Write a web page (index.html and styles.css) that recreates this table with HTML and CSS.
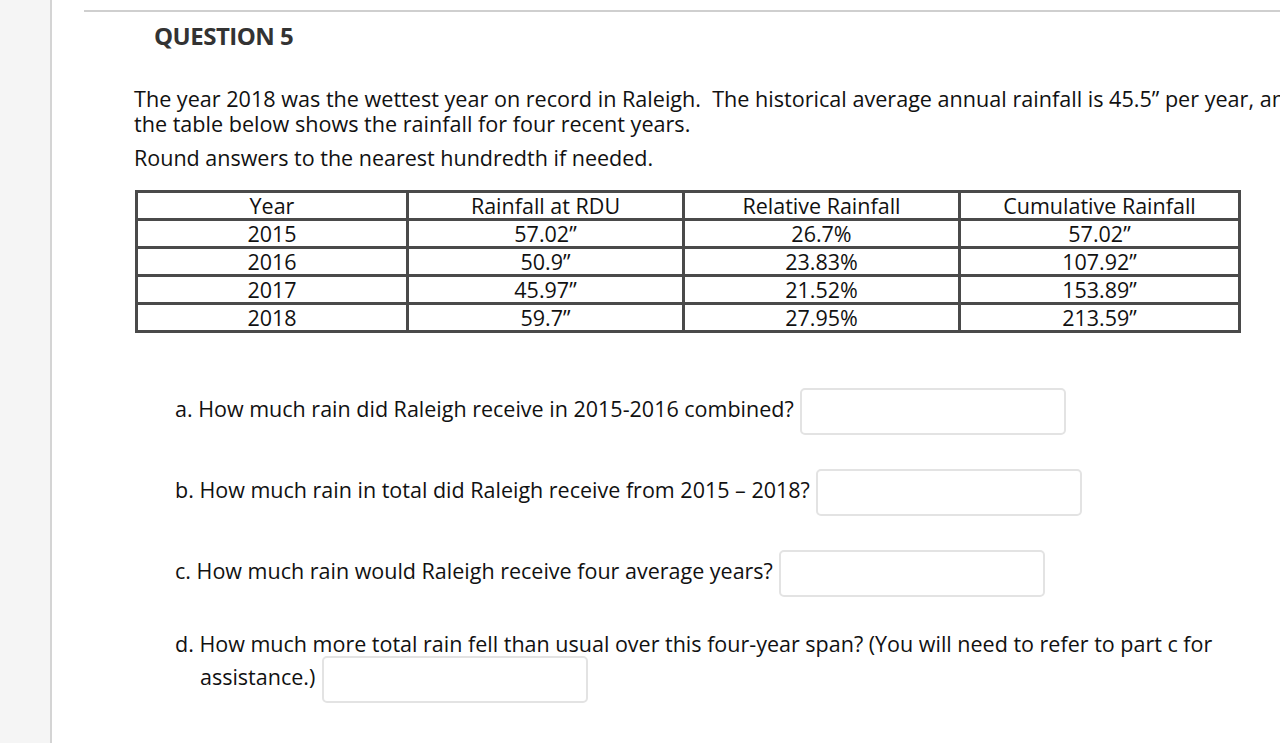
FILE: index.html
```html
<!DOCTYPE html>
<html>
<head>
<meta charset="utf-8">
<link rel="stylesheet" href="styles.css">
</head>
<body>
<div class="page">
  <aside class="sidebar"></aside>
  <main class="main">
    <div class="rule"></div>
    <h2 class="qtitle">QUESTION 5</h2>
    <div class="content">
      <p class="intro">The year 2018 was the wettest year on record in Raleigh.&nbsp; The historical average annual rainfall is 45.5” per year, and the table below shows the rainfall for four recent years.</p>
      <p class="round">Round answers to the nearest hundredth if needed.</p>
      <table class="data">
        <colgroup><col class="c1"><col class="c2"><col class="c3"><col class="c4"></colgroup>
        <tr><td>Year</td><td>Rainfall at RDU</td><td>Relative Rainfall</td><td>Cumulative Rainfall</td></tr>
        <tr><td>2015</td><td>57.02”</td><td>26.7%</td><td>57.02”</td></tr>
        <tr><td>2016</td><td>50.9”</td><td>23.83%</td><td>107.92”</td></tr>
        <tr><td>2017</td><td>45.97”</td><td>21.52%</td><td>153.89”</td></tr>
        <tr><td>2018</td><td>59.7”</td><td>27.95%</td><td>213.59”</td></tr>
      </table>
      <div class="questions">
        <p class="q">a. How much rain did Raleigh receive in 2015-2016 combined? <input class="answer" type="text"></p>
        <p class="q">b. How much rain in total did Raleigh receive from 2015 – 2018? <input class="answer" type="text"></p>
        <p class="q">c. How much rain would Raleigh receive four average years? <input class="answer" type="text"></p>
        <p class="q">d. How much more total rain fell than usual over this four-year span? (You will need to refer to part c for assistance.) <input class="answer" type="text"></p>
      </div>
    </div>
  </main>
</div>
</body>
</html>
```
FILE: styles.css
```css
html, body {
  margin: 0;
  padding: 0;
  background: #fff;
  height: 100%;
  overflow: hidden;
}
body {
  font-family: "Open Sans", "Liberation Sans", sans-serif;
  color: #111;
}
.page {
  display: flex;
  min-height: 743px;
  width: 1280px;
  overflow: hidden;
}
.sidebar {
  width: 50px;
  flex: 0 0 50px;
  background: #f5f5f5;
  border-right: 2px solid #d4d4d4;
}
.main {
  flex: 1;
  padding-left: 32px;
  padding-top: 10px;
  min-width: 0;
}
.rule {
  height: 2px;
  background: #cfcfcf;
  margin-right: -20px;
}
.qtitle {
  margin: 9px 0 0 70px;
  font-size: 24px;
  line-height: 30px;
  font-weight: 700;
  letter-spacing: -0.5px;
  color: #333;
}
.content {
  margin-left: 50px;
  width: 1175px;
}
.intro {
  margin: 35px 0 0 0;
  font-size: 21.6px;
  line-height: 25px;
}
.round {
  margin: 9px 0 0 0;
  font-size: 21.5px;
  line-height: 25px;
}
.data {
  margin: 20px 0 0 1px;
  width: 1103px;
  border-collapse: collapse;
  font-size: 21.5px;
  table-layout: fixed;
}
.c1 { width: 271px; }
.c2 { width: 276px; }
.c3 { width: 276px; }
.c4 { width: 280px; }
.data td {
  border: 3px solid #4a4a4a;
  height: 25px;
  padding: 0;
  line-height: 25px;
  text-align: center;
  color: #111;
}
.questions {
  margin-top: 55px;
}
.q {
  margin: 0 0 34px 0;
  padding-left: 66px;
  text-indent: -25px;
  font-size: 21.5px;
  line-height: 25px;
}
.answer {
  width: 262px;
  height: 43px;
  box-sizing: content-box;
  border: 2px solid #e3e3e3;
  border-radius: 5px;
  padding: 0;
  margin: 0 0 0 1px;
  vertical-align: middle;
  text-indent: 0;
  background: #fff;
}
```
